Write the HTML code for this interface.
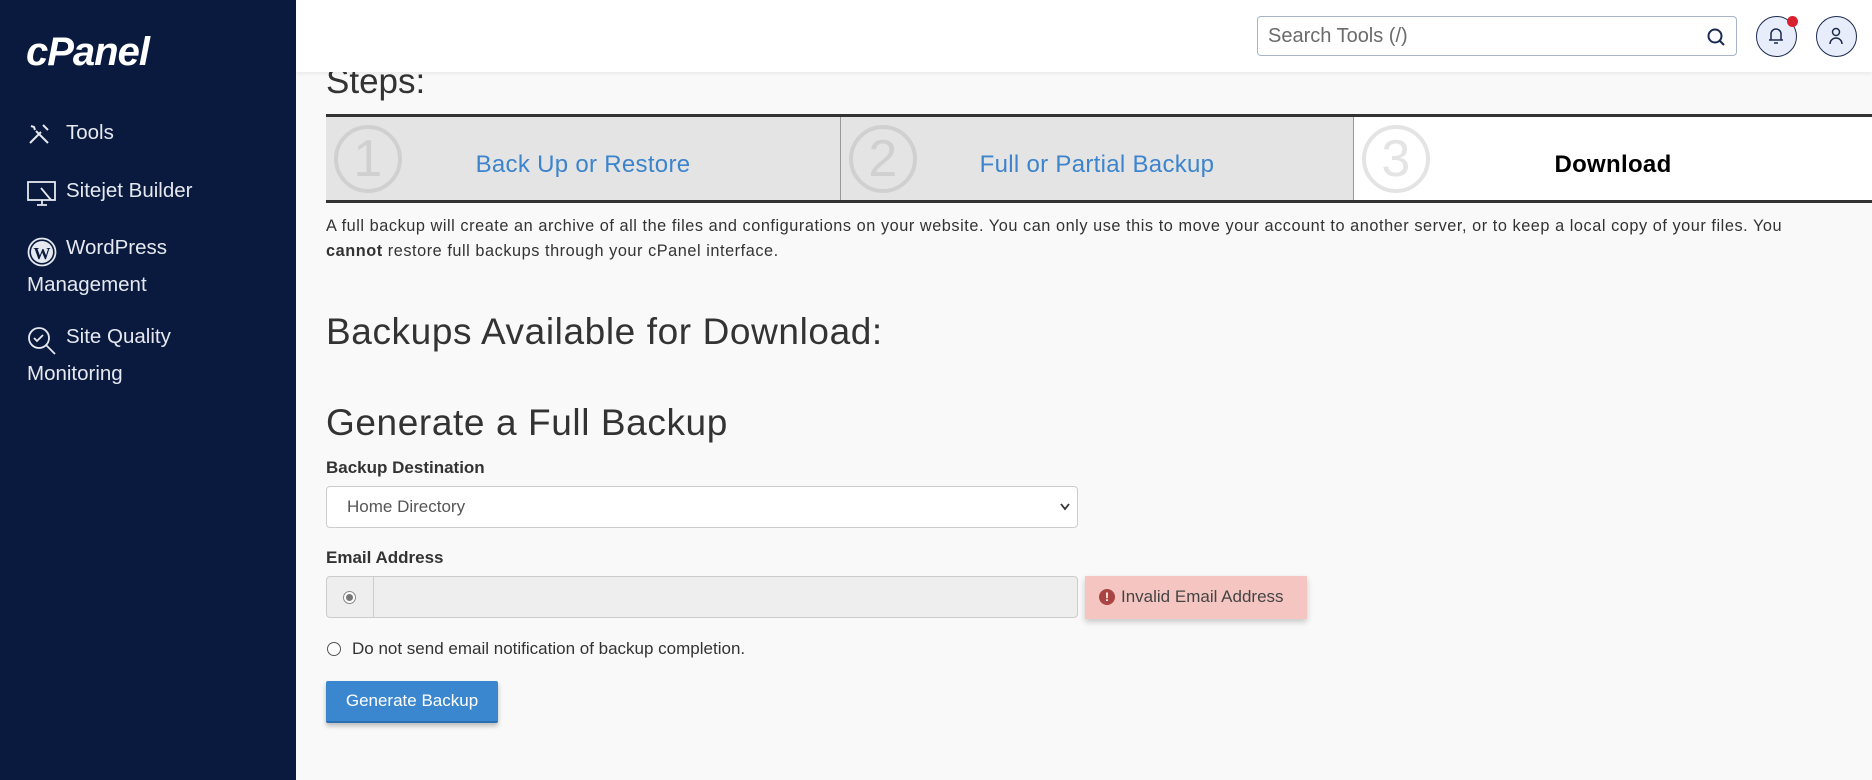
<!DOCTYPE html>
<html><head><meta charset="utf-8"><style>
*{margin:0;padding:0;box-sizing:border-box}
body{width:1872px;height:780px;overflow:hidden;background:#f9f9f9;font-family:"Liberation Sans",sans-serif;color:#333;position:relative}
.side{position:absolute;left:0;top:0;width:296px;height:780px;background:#0a1a3e;color:#e8ecf3}
.logo{position:absolute;left:26px;top:30px;font:italic bold 40px "Liberation Sans",sans-serif;color:#fff;letter-spacing:-1px}
.nav{position:absolute;left:27px;font-size:20.5px;line-height:37px;color:#e5e8ee}
.nav svg{position:absolute;left:0;top:8px}
.hdr{position:absolute;left:296px;top:0;right:0;height:72px;background:#fff;box-shadow:0 2px 4px rgba(0,0,0,.06)}
.search{position:absolute;left:1257px;top:16px;width:480px;height:40px;border:1px solid #a9b4c8;border-radius:4px;background:#fff;font-size:20px;color:#6b6b6b;padding:8px 10px}
.circ{position:absolute;top:16px;width:41px;height:41px;border-radius:50%;border:1.5px solid #1b2a4e;background:#e8edfb}
.abs{position:absolute}
.steps{position:absolute;left:326px;top:114px;width:1546px;height:89px;border-top:3px solid #333;border-bottom:3px solid #333;display:flex}
.st{position:relative;height:83px;background:#e4e4e4;font-size:24px;color:#3c84cc;letter-spacing:.3px}
.num{position:absolute;left:8px;top:8px;width:68px;height:68px;border:4px solid #d0d0d0;border-radius:50%;color:#d0d0d0;font-size:52px;text-align:center;line-height:60px;font-weight:300}
.lbl{position:absolute;top:34px;width:100%;text-align:center}
h2{position:absolute;left:326px;font-weight:normal;font-size:37px;color:#333;letter-spacing:.6px}
.b{font-weight:bold;font-size:17px;color:#333}
</style></head><body>
<div class="side">
<div class="logo">cPanel</div>
<div class="nav" style="top:114px"><svg width="24" height="24" viewBox="0 0 24 24" fill="none" stroke="#e5e8ee" stroke-width="2"><path d="M3 21L14 10M16 3l5 5M21 21L9 9M4 4l3 1 1 3"/></svg><span style="margin-left:39px">Tools</span></div>
<div class="nav" style="top:172px"><svg width="30" height="28" viewBox="0 0 30 28" fill="none" stroke="#e5e8ee" stroke-width="1.8"><rect x="1" y="2" width="27" height="18"/><path d="M10 25h10M15 20v5M14 8l10 12"/></svg><span style="margin-left:39px">Sitejet Builder</span></div>
<div class="nav" style="top:229px;width:240px"><svg width="30" height="30" viewBox="0 0 30 30"><circle cx="15" cy="15" r="13.5" fill="none" stroke="#e5e8ee" stroke-width="1.8"/><circle cx="15" cy="15" r="11" fill="#e5e8ee"/><text x="15" y="22" font-size="17" font-weight="bold" text-anchor="middle" fill="#0a1a3e" font-family="Liberation Serif">W</text></svg><span style="margin-left:39px">WordPress</span><br>Management</div>
<div class="nav" style="top:318px;width:240px"><svg width="32" height="32" viewBox="0 0 32 32" fill="none" stroke="#e5e8ee" stroke-width="1.8"><circle cx="12" cy="12" r="10"/><path d="M7 12l3 3 6-6M19 19l9 9"/></svg><span style="margin-left:39px">Site Quality</span><br>Monitoring</div>
</div>
<div class="abs" style="left:326px;top:62px;font-size:35px;color:#333">Steps:</div>
<div class="hdr"></div>
<div class="search">Search Tools (/)<svg class="abs" style="right:10px;top:10px" width="20" height="20" viewBox="0 0 20 20" fill="none" stroke="#1b2a4e" stroke-width="2"><circle cx="9" cy="9" r="6.5"/><path d="M14 14l4 4"/></svg></div>
<div class="circ" style="left:1756px"><svg class="abs" style="left:11px;top:10px" width="16" height="18" viewBox="0 0 16 18" fill="none" stroke="#1b2a4e" stroke-width="1.5"><path d="M3 13V7a5 5 0 0 1 10 0v6M1 13h14M6 16h4"/></svg></div>
<div class="abs" style="left:1787px;top:16px;width:11px;height:11px;border-radius:50%;background:#d9202f"></div>
<div class="circ" style="left:1816px"><svg class="abs" style="left:11px;top:9px" width="16" height="20" viewBox="0 0 16 20" fill="none" stroke="#1b2a4e" stroke-width="1.5"><circle cx="8" cy="6" r="3.5"/><path d="M2 18a6 6 0 0 1 12 0"/></svg></div>
<div class="steps">
<div class="st" style="width:515px;border-right:1px solid #999"><div class="num">1</div><div class="lbl">Back Up or Restore</div></div>
<div class="st" style="width:513px;border-right:1px solid #999"><div class="num">2</div><div class="lbl">Full or Partial Backup</div></div>
<div class="st" style="width:518px;background:#fff"><div class="num" style="border-color:#e4e4e4;color:#e4e4e4">3</div><div class="lbl" style="color:#000;font-weight:bold">Download</div></div>
</div>
<div class="abs" style="left:326px;top:214px;width:1500px;font-size:16.3px;line-height:25px;color:#333;letter-spacing:.55px">A full backup will create an archive of all the files and configurations on your website. You can only use this to move your account to another server, or to keep a local copy of your files. You <b>cannot</b> restore full backups through your cPanel interface.</div>
<h2 style="top:311px">Backups Available for Download:</h2>
<h2 style="top:402px">Generate a Full Backup</h2>
<div class="abs b" style="left:326px;top:458px">Backup Destination</div>
<div class="abs" style="left:326px;top:486px;width:752px;height:42px;background:#fff;border:1px solid #ccc;border-radius:4px;font-size:17px;color:#555;padding:10px 20px">Home Directory<svg class="abs" style="right:6px;top:16px" width="12" height="8" viewBox="0 0 12 8" fill="none" stroke="#333" stroke-width="1.8"><path d="M2 1l4 5 4-5"/></svg></div>
<div class="abs b" style="left:326px;top:548px">Email Address</div>
<div class="abs" style="left:326px;top:576px;width:752px;height:42px;background:#eee;border:1px solid #ccc;border-radius:4px"><div class="abs" style="left:0;top:0;width:47px;height:40px;border-right:1px solid #ccc"><div class="abs" style="left:16px;top:14px;width:13px;height:13px;border-radius:50%;border:1px solid #888;background:#fff"><div class="abs" style="left:2px;top:2px;width:7px;height:7px;border-radius:50%;background:#777"></div></div></div></div>
<div class="abs" style="left:1085px;top:576px;width:222px;height:43px;background:#f5c6c1;box-shadow:0 3px 6px rgba(0,0,0,.2);font-size:17px;color:#444;padding:11px 0 0 36px"><div class="abs" style="left:14px;top:13px;width:16px;height:16px;border-radius:50%;background:#a94442;color:#fff;font-size:12px;font-weight:bold;text-align:center;line-height:16px">!</div>Invalid Email Address</div>
<div class="abs" style="left:327px;top:642px;width:14px;height:14px;border-radius:50%;border:1px solid #555;background:#fff"></div>
<div class="abs" style="left:352px;top:639px;font-size:17px;color:#333">Do not send email notification of backup completion.</div>
<div class="abs" style="left:326px;top:681px;width:172px;height:42px;background:#3a87d0;border-bottom:2px solid #2a6fb2;border-radius:2px;box-shadow:0 3px 5px rgba(0,0,0,.25);color:#fff;font-size:17px;text-align:center;line-height:40px">Generate Backup</div>
</body></html>
